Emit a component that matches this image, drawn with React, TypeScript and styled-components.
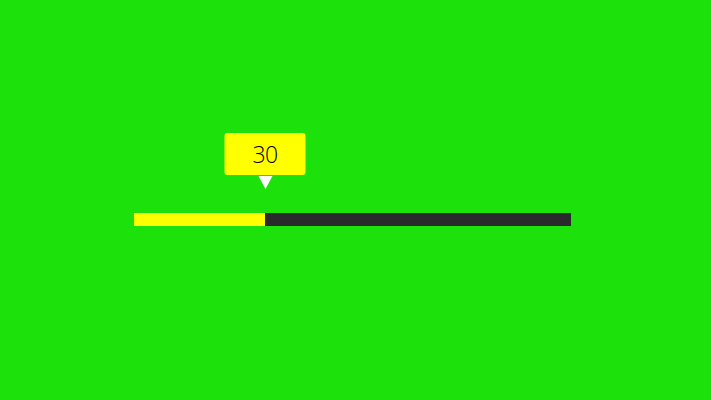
import { FC } from 'react';
import styled, { createGlobalStyle } from 'styled-components';

const value = 30;

const App: FC = () => {
  return (
    <>
      <GlobalStyle />
      <Page>
        <Slider>
          <Fill style={{ width: `${value}%` }} />
          <Tip style={{ left: `${value}%` }}>
            <Bubble>{value}</Bubble>
            <Arrow />
          </Tip>
        </Slider>
      </Page>
    </>
  );
};

// Styles
const GlobalStyle = createGlobalStyle`
  html, body {
    margin: 0;
    padding: 0;
  }
  body {
    background: #1de10b;
    font-family: "Open Sans", "Liberation Sans", sans-serif;
  }
`;

const Page = styled.div`
  width: 711px;
  height: 400px;
  box-sizing: border-box;
  padding: 213px 0 0 134px;
`;

const Slider = styled.div`
  position: relative;
  width: 437px;
  height: 13px;
  background: #2a292c;
  display: flex;
`;

const Fill = styled.div`
  height: 100%;
  background: #ffff00;
`;

const Tip = styled.div`
  position: absolute;
  bottom: 37px;
  transform: translateX(-50%);
  display: flex;
  flex-direction: column;
  align-items: center;
  gap: 1px;
`;

const Bubble = styled.div`
  width: 81px;
  height: 42px;
  border-radius: 3px;
  background: #ffff00;
  color: #000000;
  font-size: 23px;
  font-weight: 300;
  letter-spacing: -0.5px;
  display: flex;
  align-items: center;
  justify-content: center;
`;

const Arrow = styled.div`
  width: 0;
  height: 0;
  border-left: 7px solid transparent;
  border-right: 7px solid transparent;
  border-top: 13px solid #ffffff;
`;

export default App;
